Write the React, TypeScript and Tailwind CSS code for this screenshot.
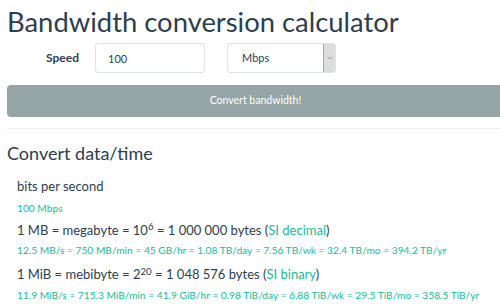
import { ChevronDown } from "lucide-react";

const green = "text-[#18bc9c]";

export default function App() {
  return (
    <div className="w-[500px] h-[305px] overflow-hidden bg-white text-[#2c3e50]" style={{ fontFamily: "Lato, 'Open Sans', sans-serif" }}>
      <div className="w-[504px] pl-[7px]">
        <h1 className="text-[27.4px] leading-none pt-[8px] h-[43px] whitespace-nowrap">Bandwidth conversion calculator</h1>

        {/* form row */}
        <div className="flex items-center h-[30px]">
          <label className="w-[73px] text-right text-[12px] font-bold pr-[1px]">Speed</label>
          <input
            type="text"
            defaultValue="100"
            className="ml-[15px] w-[110px] h-[30px] rounded-[3px] border border-[#dce4ec] px-[12px] text-[11px] text-[#2c3e50] outline-none"
          />
          <div className="ml-[22px] w-[109px] h-[30px] flex rounded-[3px] border border-[#dce4ec] overflow-hidden">
            <span className="flex-1 flex items-center pl-[14px] text-[11px]">Mbps</span>
            <span className="w-[12px] h-full bg-[#dddddd] border-l border-[#aaaaaa] flex items-center justify-center text-[#777]">
              <ChevronDown size={8} strokeWidth={2} />
            </span>
          </div>
        </div>

        <button className="mt-[12px] w-full h-[32px] rounded-[4px] bg-[#95a5a6] text-white text-[10.5px]">
          Convert bandwidth!
        </button>

        <hr className="mt-[11px] border-t border-[#ecf0f1]" />

        <h2 className="text-[18px] leading-none mt-[15px]">Convert data/time</h2>

        <div className="pl-[10px] whitespace-nowrap">
          <div className="text-[13px] leading-none mt-[18px]">bits per second</div>
          <div className={`text-[10.2px] leading-none mt-[10px] ${green}`}>100 Mbps</div>

          <div className="text-[13px] leading-none mt-[11px]">
            1 MB = megabyte = 10<sup>6</sup> = 1 000 000 bytes (<span className={green}>SI decimal</span>)
          </div>
          <div className={`text-[10.2px] leading-none mt-[8px] ${green}`}>
            12.5 MB/s = 750 MB/min = 45 GB/hr = 1.08 TB/day = 7.56 TB/wk = 32.4 TB/mo = 394.2 TB/yr
          </div>

          <div className="text-[13px] leading-none mt-[13px]">
            1 MiB = mebibyte = 2<sup>20</sup> = 1 048 576 bytes (<span className={green}>SI binary</span>)
          </div>
          <div className={`text-[10.2px] leading-none mt-[9px] ${green}`}>
            11.9 MiB/s = 715.3 MiB/min = 41.9 GiB/hr = 0.98 TiB/day = 6.88 TiB/wk = 29.5 TiB/mo = 358.5 TiB/yr
          </div>
        </div>
      </div>
    </div>
  );
}
